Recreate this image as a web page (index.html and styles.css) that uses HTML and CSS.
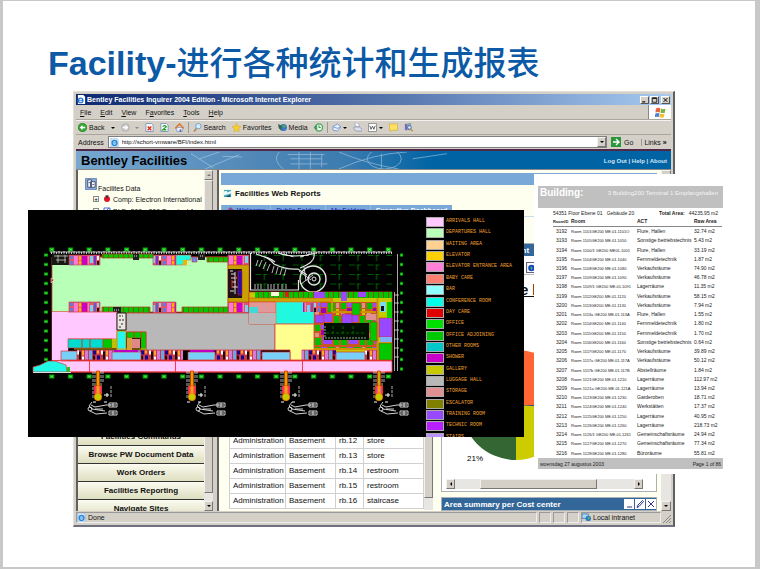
FILE: index.html
```
<!DOCTYPE html>
<html lang="zh-CN">
<head>
    <meta charset="UTF-8">
    <meta name="viewport" content="width=device-width, initial-scale=1.0">
    <title>Facility-进行各种统计和生成报表</title>
    <link rel="stylesheet" href="styles.css">
</head>
<body>
<main class="slide">
    <h1>Facility-<span>进行各种统计和生成报表</span></h1>

    <div class="stage">
        <!-- Browser window -->
        <section class="window">
            <header class="titlebar">
                <svg class="icon" viewBox="0 0 10 10"><path d="M1 0h6l2 2v8H1z" fill="#fff"/><circle cx="4" cy="6" r="2.5" fill="none" stroke="#2878d8" stroke-width="1.5"/><path d="M2 6h5" stroke="#2878d8"/></svg>
                <span class="caption">Bentley Facilities Inquirer 2004 Edition - Microsoft Internet Explorer</span>
                <button class="winbtn" aria-label="Minimize"><svg viewBox="0 0 8 8"><path d="M1 6.5h4" stroke="#000" stroke-width="1.5"/></svg></button>
                <button class="winbtn" aria-label="Maximize"><svg viewBox="0 0 8 8"><path d="M1 1.5h6V7H1z" fill="none" stroke="#000"/><path d="M1 1.5h6" stroke="#000" stroke-width="1.5"/></svg></button>
                <button class="winbtn close" aria-label="Close"><svg viewBox="0 0 8 8"><path d="M1.500 1.500l5 5m0-5l-5 5" stroke="#000" stroke-width="1.3"/></svg></button>
            </header>

            <nav class="menubar">
                <button><u>F</u>ile</button>
                <button><u>E</u>dit</button>
                <button><u>V</u>iew</button>
                <button>F<u>a</u>vorites</button>
                <button><u>T</u>ools</button>
                <button><u>H</u>elp</button>
                <span class="flag"><svg viewBox="0 0 12 12"><path d="M1 2q2-2 5-.5L5 6Q3 5 .500 6z" fill="#e8643c"/><path d="M6.800 2Q9 3 11.500 2L10.500 6.500Q8 7 5.800 6z" fill="#78b43c"/><path d="M.500 7Q3 6 5 7L4 11Q2 10-.500 11z" fill="#4a82d8"/><path d="M5.600 7Q8 8 10.300 7.300L9.500 11.500Q7 12 4.600 11z" fill="#f4c030"/></svg></span>
            </nav>

            <div class="toolbar">
                <button class="back"><svg class="icon" viewBox="0 0 10 10"><circle cx="5" cy="5" r="4.500" fill="#38a838" stroke="#288828"/><path d="M8 5H3m2-2L3 5l2 2" fill="none" stroke="#fff" stroke-width="1.400"/></svg>Back <i class="drop"></i></button>
                <button class="next" aria-label="Forward"><svg class="icon" viewBox="0 0 10 10"><circle cx="5" cy="5" r="4.300" fill="#ccc" stroke="#aaa"/><path d="M2 5h5M5 3l2 2-2 2" fill="none" stroke="#fff" stroke-width="1.400"/></svg><i class="drop grey"></i></button>
                <button aria-label="Stop"><svg class="icon" viewBox="0 0 10 10"><path d="M1 .500h6l2 2v7H1z" fill="#fff" stroke="#7890b8"/><path d="M3 4l4 4m0-4L3 8" stroke="#e02818" stroke-width="1.600"/></svg></button>
                <button aria-label="Refresh"><svg class="icon" viewBox="0 0 10 10"><path d="M1 .500h6l2 2v7H1z" fill="#fff" stroke="#7890b8"/><path d="M3 4q2-2 4 0L3 7.500h4" fill="none" stroke="#28a028" stroke-width="1.400"/></svg></button>
                <button aria-label="Home"><svg class="icon" viewBox="0 0 10 10"><path d="M2 5v4.500h6V5z" fill="#f4f4ff" stroke="#7888b0" stroke-width=".7"/><path d="M0 6l5-5 5 5" fill="none" stroke="#d87828" stroke-width="1.600"/><path d="M5 7h2v3H5z" fill="#4878c8"/></svg></button>
                <span class="sep"></span>
                <button><svg class="icon" viewBox="0 0 10 10"><path d="M1 9.500l3-3.500" stroke="#b08850" stroke-width="1.800"/><circle cx="6" cy="3.500" r="3" fill="#d8ecff" stroke="#6898d0"/></svg>Search</button>
                <button><svg class="icon" viewBox="0 0 10 10"><path d="M5 0l1.400 3.500L10 4 7.200 6.300 8 10 5 8 2 10l.8-3.700L0 4l3.600-.500z" fill="#f8d028" stroke="#d8a020" stroke-width=".5"/></svg>Favorites</button>
                <button><svg class="icon" viewBox="0 0 10 10"><circle cx="6" cy="5" r="4" fill="#3878c8"/><path d="M4 2l5 1-2 3z" fill="#48b048"/><path d="M0 1l4 2v5L1 6z" fill="#386050"/></svg>Media</button>
                <button aria-label="History"><svg class="icon" viewBox="0 0 10 10"><circle cx="5.500" cy="5" r="4" fill="#e8f8e8" stroke="#48a858" stroke-width="1.400"/><path d="M5.500 2.500V5h2M0 5l3 2 0-4z" fill="none" stroke="#288848"/></svg></button>
                <span class="sep"></span>
                <button aria-label="Mail"><svg class="icon" viewBox="0 0 10 10"><path d="M1 4l5-3 4 3-4 5-5-1z" fill="#e4ecfc" stroke="#7898c8"/><path d="M1 4l5 2 4-2" fill="none" stroke="#7898c8"/></svg><i class="drop"></i></button>
                <button aria-label="Print"><svg class="icon" viewBox="0 0 10 10"><path d="M2 0h4l1 4H3z" fill="#fff" stroke="#8898b8" stroke-width=".7"/><path d="M1 4.500h6l3 2V9H4L1 7z" fill="#dce0ec" stroke="#8890a8" stroke-width=".8"/></svg></button>
                <button aria-label="Edit"><svg class="icon" viewBox="0 0 10 10"><path d="M.500.500h9v9h-9z" fill="#fff" stroke="#888"/><path d="M2 3l1.300 4L5 3.500 6.500 7 8 3" fill="none" stroke="#555"/></svg><i class="drop"></i></button>
                <button aria-label="Discuss"><svg class="icon" viewBox="0 0 10 10"><path d="M.500 1h9v7h-5L2 9.500V8H.500z" fill="#ffe060" stroke="#c8a840" stroke-width=".7"/></svg></button>
                <button aria-label="Research"><svg class="icon" viewBox="0 0 10 10"><path d="M1 1h3v7H1z" fill="#7868b8"/><path d="M4 0h4v8H4z" fill="#90a8a0"/><circle cx="6" cy="5" r="2" fill="#d8f0ff" stroke="#3868b0"/><path d="M7 7l3 2" stroke="#c89030" stroke-width="1.500"/></svg></button>
            </div>

            <form class="address">
                <label for="url">Address</label>
                <div class="field">
                    <svg class="icon" viewBox="0 0 10 10"><path d="M1 0h6l2 2v8H1z" fill="#d8ecff" stroke="#88a8d0" stroke-width=".6"/><circle cx="5" cy="5.500" r="2.700" fill="none" stroke="#2888d8" stroke-width="1.500"/><path d="M3 5.500h5" stroke="#2888d8"/></svg>
                    <input id="url" type="text" value="http://schort-vmware/BFI/index.html">
                    <button type="button" class="arrow" aria-label="Show addresses"><i class="drop"></i></button>
                </div>
                <button type="button" class="go"><svg class="icon" viewBox="0 0 10 10"><path d="M0 0h10v10H0z" fill="#289838"/><path d="M2 5h5M5 2l3 3-3 3" fill="none" stroke="#fff" stroke-width="1.400"/></svg>Go</button>
                <button type="button" class="links">Links <b>»</b></button>
            </form>

            <div class="banner">
                <strong>Bentley Facilities</strong>
                <svg class="banner-art" viewBox="0 0 220 20" preserveAspectRatio="none">
                    <g fill="none" stroke="#b4d0e8" stroke-width=".7" opacity=".7">
                        <path d="M0 2l16 17M6 8l14-8M10 20l24-17M22 5l14 1M62 0q-5 10 3 20M68 3h26M70 8h22M70 14h26M76 0v20M84 0v20M92 2v16M104 0q20 14 42 20M104 20q24-18 48-20M156 8l24-6M134 2v18"/>
                        <circle cx="136" cy="8" r="12"/>
                    </g>
                </svg>
                <span class="banner-links"><a href="#">Log Out</a> | <a href="#">Help</a> | <a href="#">About</a></span>
            </div>

            <div class="frames">
                <aside class="sidebar">
                    <div class="sidebar-body">
                        <ul class="tree">
                            <li class="root"><svg viewBox="0 0 13 13"><path d="M.500.500h12v12H.500z" fill="#88a8d8" stroke="#6888b8"/><path d="M3 2h4v8H3zM6 4h5v6H6z" fill="#fff" stroke="#405070"/><path d="M4 5h2m2 2h2" stroke="#405070"/></svg>Facilites Data</li>
                            <li><b class="plus">+</b><svg viewBox="0 0 8 8"><circle cx="4" cy="4" r="3" fill="#d81828"/><path d="M3 0l1 3 1-3" stroke="#333" fill="none"/></svg>Comp: Electron International</li>
                            <li><b class="plus">+</b><svg viewBox="0 0 8 8"><path d="M1 1h6v6H1z" fill="#fff" stroke="#4868d0"/><path d="M2 5l4-4" stroke="#4868d0"/></svg>BLD: 200 - 200 Terminal 1</li>
                        </ul>
                        <nav class="sidenav">
                            <button>Facilities Commands</button>
                            <button>Browse PW Document Data</button>
                            <button>Work Orders</button>
                            <button>Facilities Reporting</button>
                            <button>Navigate Sites</button>
                        </nav>
                    </div>
                    <div class="scroll">
                        <button class="arrow" aria-label="Scroll up"><i class="drop up"></i></button>
                        <span class="thumb"></span>
                        <button class="arrow" aria-label="Scroll down"><i class="drop"></i></button>
                    </div>
                </aside>

                <section class="content">
                    <div class="content-body">
                        <div class="band"></div>
                        <h2><svg viewBox="0 0 10 10"><path d="M1 1h8v8H1z" fill="#48a8b8"/><path d="M0 3l4-1 1 2 4-2v3L1 7z" fill="#e8fcff"/><path d="M3 9l5-3v3z" fill="#184868"/></svg>Facilities Web Reports</h2>
                        <nav class="tabs">
                            <a href="#"><svg viewBox="0 0 8 8"><path d="M0 4l4-4 4 4H6.500v4h-5V4z" fill="#904888"/></svg>Welcome</a>
                            <a href="#">Public Folders</a>
                            <a href="#">My Folders</a>
                            <a href="#" class="active">Executive Dashboard</a>
                        </nav>
                        <div class="panels">
                            <div class="rooms">
                                <table>
                                    <tr><td>Administration</td><td>Basement</td><td>rb.11</td><td>store</td></tr>
                                    <tr><td>Administration</td><td>Basement</td><td>rb.12</td><td>store</td></tr>
                                    <tr><td>Administration</td><td>Basement</td><td>rb.13</td><td>store</td></tr>
                                    <tr><td>Administration</td><td>Basement</td><td>rb.14</td><td>restroom</td></tr>
                                    <tr><td>Administration</td><td>Basement</td><td>rb.15</td><td>restroom</td></tr>
                                    <tr><td>Administration</td><td>Basement</td><td>rb.16</td><td>staircase</td></tr>
                                </table>
                                <div class="scroll"><span class="thumb"></span></div>
                            </div>
                            <div class="portlets">
                                <section class="portlet chart">
                                    <h3>Space management</h3>
                                    <div class="chart-tools"><svg viewBox="0 0 10 10"><path d="M.500.500h9v9h-9z" fill="#fff" stroke="#606080"/><circle cx="5" cy="5.500" r="3" fill="#1848c0"/><path d="M4 4l2 1-1 3z" fill="#50c050"/></svg></div>
                                    <h4>Space by type</h4>
                                    <svg class="pie" viewBox="0 0 206 136">
                                        <path d="M70 62V7a55 55 0 0 1 55 55z" fill="#ff6633"/>
                                        <path d="M70 62h55a55 55 0 0 1-55 55z" fill="#cccc00"/>
                                        <path d="M70 62v55a55 55 0 0 1-55-55z" fill="#336633"/>
                                        <path d="M70 62h55v3z" fill="#333399"/>
                                        <text x="21" y="118">21%</text>
                                    </svg>
                                    <div class="scroll flat">
                                        <button class="arrow" aria-label="Scroll left"><i class="drop left"></i></button>
                                        <span class="thumb"></span>
                                        <button class="arrow" aria-label="Scroll right"><i class="drop right"></i></button>
                                    </div>
                                </section>
                                <section class="portlet">
                                    <h3>Area summary per Cost center
                                        <span class="tools">
                                            <button aria-label="Minimize"><svg viewBox="0 0 10 10"><path d="M3 8h5"/></svg></button>
                                            <button aria-label="Edit"><svg viewBox="0 0 10 10"><path d="M2 8.500L3 6l4.500-4.500 1 1L4 7.500z"/></svg></button>
                                            <button aria-label="Close"><svg viewBox="0 0 10 10"><path d="M2 2l6 6m0-6L2 8"/></svg></button>
                                        </span>
                                    </h3>
                                </section>
                            </div>
                        </div>
                    </div>
                    <div class="scroll">
                        <button class="arrow" aria-label="Scroll up"><i class="drop up"></i></button>
                        <span class="track"></span>
                        <button class="arrow" aria-label="Scroll down"><i class="drop"></i></button>
                    </div>
                </section>
            </div>

            <footer class="status">
                <span class="done"><svg class="icon" viewBox="0 0 10 10"><path d="M1 0h6l2 2v8H1z" fill="#d8ecff" stroke="#88a8d0" stroke-width=".6"/><circle cx="5" cy="5.500" r="2.700" fill="none" stroke="#2888d8" stroke-width="1.500"/><path d="M3 5.500h5" stroke="#2888d8"/></svg>Done</span>
                <span class="cell"></span>
                <span class="cell"></span>
                <span class="cell"></span>
                <span class="zone"><svg class="icon" viewBox="0 0 10 10"><path d="M0 1h7v5H0z" fill="#a8d8f8" stroke="#3868a8" stroke-width=".8"/><circle cx="7" cy="6" r="3" fill="#2878d0"/><path d="M6 4l3 1-2 3z" fill="#50b850"/></svg>Local intranet</span>
                <svg class="grip" viewBox="0 0 8 8"><path d="M8 0L0 8M8 3L3 8M8 6L6 8" stroke="#888"/></svg>
            </footer>
        </section>

        <!-- Terminal floor plan with room type legend -->
        <section class="plan">
            <svg class="drawing" viewBox="0 0 396 227">
                <defs>
                    <pattern id="tagsX" width="18.700" height="6" x="14.300" y="36" patternUnits="userSpaceOnUse">
                        <path d="M7 1.500h5v4H7z" fill="#00a800"/><path d="M8 2.500l3 2m0-2l-3 2" stroke="#70ff70" stroke-width=".7"/>
                    </pattern>
                    <pattern id="tagsX2" width="18.700" height="6" x="14.300" y="163" patternUnits="userSpaceOnUse">
                        <path d="M7 1.500h5v4H7z" fill="#00a800"/><path d="M8 2.500l3 2m0-2l-3 2" stroke="#70ff70" stroke-width=".7"/>
                    </pattern>
                    <pattern id="tagsY" width="6" height="9.500" x="15" y="40" patternUnits="userSpaceOnUse">
                        <path d="M1 3.500h4v3H1z" fill="#00a800"/><path d="M2 5h2" stroke="#80ff80" stroke-width=".8"/>
                    </pattern>
                    <pattern id="tagsY2" width="6" height="9.500" x="371" y="40" patternUnits="userSpaceOnUse">
                        <path d="M1 3.500h3v3H1z" fill="#00b800"/><path d="M2 5h1" stroke="#80ff80"/>
                    </pattern>
                    <pattern id="ticks" width="5" height="3" y="41" patternUnits="userSpaceOnUse">
                        <path d="M0 1h5M1 0v3M3.500 1v2" stroke="#eee" stroke-width=".8"/>
                    </pattern>
                    <pattern id="shops" width="31" height="11" x="41" y="45" patternUnits="userSpaceOnUse">
                        <path d="M0 0h31v11H0z" fill="#e05868"/>
                        <path d="M1 1h3v3H1zM1 6h3v4H1z" fill="#6878e0"/><path d="M5 1h4v9H5z" fill="#ff78d8"/>
                        <path d="M10 1h2v4h-2zM10 6h2v4h-2z" fill="#ffb000"/><path d="M13 1h5v9h-5z" fill="#c800c8"/>
                        <path d="M19 1h1v9h-1z" fill="#ff78d8"/><path d="M21 1h3v7h-3z" fill="#78d0f8"/>
                        <path d="M25 1h2v9h-2z" fill="#8030c0"/><path d="M28 1h2v4h-2z" fill="#fff"/><path d="M28 6h2v4h-2z" fill="#181818"/>
                    </pattern>
                    <pattern id="shopsLow" width="31" height="11" x="41" y="92" patternUnits="userSpaceOnUse">
                        <path d="M0 0h31v11H0z" fill="#e05868"/>
                        <path d="M1 1h3v3H1zM1 6h3v4H1z" fill="#6878e0"/><path d="M5 1h4v9H5z" fill="#ff78d8"/>
                        <path d="M10 1h2v4h-2zM10 6h2v4h-2z" fill="#ffb000"/><path d="M13 1h5v9h-5z" fill="#c800c8"/>
                        <path d="M19 1h1v9h-1z" fill="#ff78d8"/><path d="M21 3h3v7h-3z" fill="#78d0f8"/>
                        <path d="M25 1h2v9h-2z" fill="#6858c0"/><path d="M28 1h2v4h-2z" fill="#a0c8f0"/><path d="M28 6h2v4h-2z" fill="#181818"/>
                    </pattern>
                    <pattern id="service" width="24" height="11" x="49" y="139.500" patternUnits="userSpaceOnUse">
                        <path d="M0 0h24v11H0z" fill="#c83848"/>
                        <path d="M0 1h2v4H0zM5 7h2v3H5z" fill="#fff"/><path d="M2 2h2v8H2zM16 6h2v4h-2z" fill="#101010"/>
                        <path d="M5 1h2v5H5zM20 1h2v3h-2z" fill="#ffa828"/><path d="M8 1h3v9H8z" fill="#d878d8"/>
                        <path d="M12 1h3v9h-3z" fill="#68a8e8"/><path d="M16 1h3v4h-3zM20 6h3v4h-3z" fill="#180090"/>
                    </pattern>
                    <pattern id="green" width="5" height="7" patternUnits="userSpaceOnUse">
                        <path d="M0 0h5v7H0z" fill="#00c800"/><path d="M.500 0v7" stroke="#b83000" stroke-width=".8"/>
                    </pattern>
                    <pattern id="rooms" width="26" height="22" x="286" y="92" patternUnits="userSpaceOnUse">
                        <path d="M0 0h26v22H0z" fill="#c85820"/>
                        <path d="M1 1h5v6H1zM14 1h7v9h-7zM1 14h6v7H1zM20 14h5v7h-5z" fill="#00c000"/>
                        <path d="M7 1h6v4H7zM9 12h9v8H9z" fill="#9848ff"/><path d="M7 6h5v5H7z" fill="#a000b0"/>
                        <path d="M22 1h3v5h-3zM1 9h4v4H1z" fill="#e09090"/><path d="M22 7h3v6h-3z" fill="#c8c800"/>
                    </pattern>
                    <pattern id="site" width="18.700" height="9.500" x="3" y="45" patternUnits="userSpaceOnUse">
                        <path d="M0 .500h12" stroke="#008000" stroke-width=".7" stroke-dasharray="6 2"/><path d="M9 0v6" stroke="#00a000" stroke-width=".7"/>
                    </pattern>
                    <g id="pier">
                        <path d="M-5 0v28M5 0v12M13 15v12M-3 0v16M3 0v16" stroke="#ddd" stroke-width=".8" stroke-dasharray="3 1"/>
                        <path d="M-1.500 0h3v17h-3z" fill="#c8b000" stroke="#f03000" stroke-width=".8"/>
                        <path d="M-3.500 15h7v8h-7z" fill="#e038a0" stroke="#ff3000"/>
                        <path d="M-1.500 15h3v9h-3z" fill="#ffa000"/>
                        <circle cy="26" r="3.700" fill="#c8c800" stroke="#ff7800" stroke-width=".7"/>
                        <path d="M6 24h5m-2-2v4M-5 31h3m8 0h3" stroke="#fff"/>
                    </g>
                    <g id="note" fill="none" stroke="#e8e8e8" stroke-width=".9">
                        <circle cx="0" cy="7" r="2"/><path d="M2 0l-3 4 3 3 13 2M1 3l4 2 11-2h5M5 7h8M0 9l6 3 11-1"/>
                        <path d="M19 1h8v4h-8zM19 9h8v4h-8z"/><path d="M20 3h6m-3-2v4M20 11h6m-3-2v4"/>
                    </g>
                </defs>

                <path d="M20 36h348v6H20z" fill="url(#tagsX)"/>
                <path d="M20 163h348v6H20z" fill="url(#tagsX2)"/>
                <path d="M15 40h6v117h-6z" fill="url(#tagsY)"/>
                <path d="M371 40h6v123h-6z" fill="url(#tagsY2)"/>
                <path d="M22 41h342v3H22z" fill="url(#ticks)"/>
                <path d="M222 44h142v37H222z" fill="url(#site)"/>

                <!-- forecourt -->
                <g fill="none" stroke="#e4e4e4">
                    <path d="M222.500 43v37h48V70M228 44q14 4 18 10 12 6 24 5l9 6M250 43q16 6 38 0M233 46q8 1 14 6M272 58q16-6 14-14" stroke-width="1.200"/>
                    <path d="M256 44l10 3m6 0l9-2" stroke-dasharray="4 2"/>
                    <path d="M230 50l-2 6m6-6l-3 7m7-5l-3 7m7-5l-3 7m7-5l-2 7m6-6l-2 7m6-6l-2 7m6-6l-2 7M227 74v5m3-5v5m3-5v5m7-5v5m3-5v5m3-5v5m4-5v5m4-5v5m4-5v5" stroke-width=".8"/>
                    <circle cx="285" cy="69" r="13" stroke-width="1.400"/><circle cx="286" cy="69" r="6" stroke-width="1.400"/><circle cx="286" cy="69" r="2"/>
                    <path d="M271 61l12 9m-10 4l12-9M276 57l2 14" stroke-width=".9"/>
                </g>

                <!-- departures hall -->
                <path d="M24 47h176v55H24z" fill="#b8ffb8" stroke="#d85030" stroke-width=".8"/>
                <path d="M24 44h17v11H24z" fill="#181810"/><path d="M26 46h14M28 50h10M30 45v8m7-8v8" stroke="#ccc" stroke-width=".8"/>
                <path d="M41 45h31v10H41zM125 45h23v10h-23zM200 45h21v10h-21z" fill="url(#shops)" stroke="#b04060" stroke-width=".6"/>
                <path d="M41 92h31v11H41zM125 92h23v11h-23zM200 92h21v11h-21z" fill="url(#shopsLow)" stroke="#b04060" stroke-width=".6"/>
                <path d="M74 44h51v4H74zM74 97h48v6H74zM154 97h46v6h-46zM179 47h21v5h-21z" fill="url(#green)" stroke="#a04018" stroke-width=".7"/>
                <path d="M148 45h15v5h-5v5h-10z" fill="#20f8e0" stroke="#f05030" stroke-width=".6"/><path d="M155 50h4v5h-4z" fill="#f8b000"/>
                <path d="M164 47h5v5h-5z" fill="#6888f0" stroke="#d03030" stroke-width=".6"/>
                <path d="M105 44h6v6h-6zM170 44h7v6h-7zM85 97h8v6h-8z" fill="#202020"/><path d="M106 46h4m62 0h4M86 100h6" stroke="#ddd" stroke-dasharray="1 1"/>
                <path d="M23 68l3 2-3 3z" fill="#e02020" stroke="#fff" stroke-width=".5"/>
                <path d="M200 55h21v37h-21z" fill="#c8a000" stroke="#d04818" stroke-width=".7"/><path d="M200 59h14v29h-14z" fill="#201018"/>
                <path d="M202 61h3m2 3h-4m0 4h6m-5 4h4m-4 5h6m-8 4h4m1-19v22" stroke="#ddd" stroke-width="1"/><path d="M204 70v8m4-12v3" stroke="#e02020" stroke-width="1"/>
                <path d="M210 61h4v24h-4z" fill="#2010b0" stroke="#d01818" stroke-width=".6"/>

                <!-- arrivals and luggage halls -->
                <path d="M24 102h65v27H40v11h-7v11h331v11H24z" fill="#ffc8ff" stroke="#e04040" stroke-width=".8"/>
                <path d="M24 102h16v49H24z" fill="#ffc8ff"/>
                <path d="M98 103h149v37H118v-18H98z" fill="#b8b8b8" stroke="#d03838" stroke-width=".8"/>
                <path d="M89 103h9v17h-9z" fill="#e8e8e0" stroke="#222"/><path d="M91 106h4m-4 4h5m-3 4h3m-5 3h3" stroke="#222" stroke-dasharray="2 1"/>
                <path d="M40 129h14v9H40zM54 129h8v9h-8zM62 129h13v9H62z" fill="#00dcd0" stroke="#d83828" stroke-width=".6"/>
                <path d="M75 129h9v9h-9zM99 122h7v6h-7zM106 122h7v6h-7zM113 122h5v18h-5z" fill="#00c800" stroke="#d03818" stroke-width=".6"/>
                <path d="M84 129h5v9h-5z" fill="#c0c000"/><path d="M89 121h9v19h-9z" fill="#20f8f0" stroke="#e09000"/>
                <path d="M99 128h5v12h-5z" fill="#d8a040"/><path d="M104 129h8v9h-8z" fill="#e08888"/>
                <path d="M46 139h72" stroke="#e0a020"/>

                <!-- right wing -->
                <path d="M221 82h143v68h-79v-36h-64z" fill="#c8c800" stroke="#d04020" stroke-width=".8"/>
                <path d="M227 82h137v6H227z" fill="url(#green)"/><path d="M243 82h8v4h-8z" fill="#fff8d8"/><path d="M257 82h4v5h-4z" fill="#e81818"/>
                <path d="M221 88h83v4h-83z" fill="#c8a800" stroke="#d83818" stroke-width=".5"/>
                <path d="M286 82h11v6h-11zM313 82h6v9h-6zM330 82h8v5h-8z" fill="#a048f8"/>
                <path d="M221 92h27v11h-27z" fill="#e09898" stroke="#e04040" stroke-width=".6"/>
                <path d="M221 97h9v6h-9z" fill="#40d8d8"/><path d="M221 103h27v11h-27z" fill="#b8b8b8"/>
                <path d="M248 92h38v22h-38z" fill="#20f8e0" stroke="#e08040" stroke-width=".6"/>
                <path d="M247 114h39v26h-12v10h-12v-10h-15z" fill="#ffff90" stroke="#e04040" stroke-width=".8"/>
                <path d="M286 92h63v48h-63z" fill="url(#rooms)"/>
                <path d="M275 92h17v10h-17z" fill="url(#shopsLow)"/>
                <path d="M304 88v14M349.500 88v62M304 102h44M286 139h64" stroke="#d09000" stroke-width="2" fill="none"/>
                <path d="M324 93h8v12h-8zM342 112h7v19h-7zM351 133h13v17h-13z" fill="#00c800" stroke="#d02818" stroke-width=".6"/>
                <path d="M314 104h10v10h-10zM287 105h9v8h-9zM351 108h13v19h-13z" fill="#9848ff" stroke="#d02818" stroke-width=".6"/>
                <path d="M338 104h10v6h-10z" fill="#e09090"/><path d="M352 92h6v10h-6z" fill="#80d8f0"/><path d="M353 96h3v5h-3z" fill="#111"/><path d="M359 92h5v16h-5z" fill="#00d800"/>
                <path d="M352 127h12v5h-12z" fill="#80b0f8"/>
                <path d="M296 113h45v17h-45z" fill="#001000"/><path d="M298 123h40M305 116v10m10-10v10m10-10v10" stroke="#006000" stroke-dasharray="3 2"/>
                <path d="M297 116v12h42" fill="none" stroke="#ccc" stroke-width=".8" stroke-dasharray="2 1"/>
                <path d="M366.500 82v79M369.500 44v117" stroke="#bbb" stroke-width=".9"/><path d="M366 85h5m-5 8h5m-5 9h5m-5 9h5m-5 9h5m-5 9h5m-5 9h5m-5 9h5" stroke="#ddd" stroke-width=".8"/>

                <!-- service row -->
                <path d="M49 140h106v10H49zM187 140h47v10h-47zM274 140h34v10h-34zM337 140h12v10h-12z" fill="url(#service)"/>
                <path d="M33 141h16v9H33zM84 142h29v8H84zM160 142h27v8h-27zM234 142h28v8h-28zM308 142h29v8h-29z" fill="#78d0f8" stroke="#e03030" stroke-width=".7"/>
                <path d="M86 140h24v2H86zM162 140h24v2h-24z" fill="#c000c0"/>
                <path d="M24 150.500h340M24 162h340M61.500 151v11M147.500 151v11M274.500 151v11" stroke="#f03030" stroke-width=".9"/>
                <path d="M5 162v-5l7-2 8-4h7l11 4 1 7z" fill="#20f8e8" stroke="#e03030" stroke-width=".7"/><path d="M39 157h3v5h-3z" fill="#20c020"/>
                <path d="M5 162.500h38" stroke="#ddd"/>

                <use href="#pier" x="70" y="161"/><use href="#pier" x="164" y="161"/><use href="#pier" x="258" y="161"/><use href="#pier" x="351" y="161"/>
                <use href="#note" x="62" y="192"/><use href="#note" x="170" y="192"/><use href="#note" x="262" y="192"/><use href="#note" x="353" y="192"/>
            </svg>
            <ul class="legend">
                <li><i class="c1"></i>ARRIVALS HALL</li>
                <li><i class="c2"></i>DEPARTURES HALL</li>
                <li><i class="c3"></i>WAITING AREA</li>
                <li><i class="c4"></i>ELEVATOR</li>
                <li><i class="c5"></i>ELEVATOR ENTRANCE AREA</li>
                <li><i class="c6"></i>BABY CARE</li>
                <li><i class="c7"></i>BAR</li>
                <li><i class="c8"></i>CONFERENCE ROOM</li>
                <li><i class="c9"></i>DAY CARE</li>
                <li><i class="c10"></i>OFFICE</li>
                <li><i class="c11"></i>OFFICE ADJOINING</li>
                <li><i class="c12"></i>OTHER ROOMS</li>
                <li><i class="c13"></i>SHOWER</li>
                <li><i class="c14"></i>GALLERY</li>
                <li><i class="c15"></i>LUGGAGE HALL</li>
                <li><i class="c16"></i>STORAGE</li>
                <li><i class="c17"></i>ESCALATOR</li>
                <li><i class="c18"></i>TRAINING ROOM</li>
                <li><i class="c19"></i>TECHNIC ROOM</li>
                <li><i class="c20"></i>STAIRS</li>
            </ul>
        </section>

        <!-- Room area report -->
        <section class="report">
            <header><strong>Building:</strong><span>3 Building200 Terminal 1 Empfangshallen</span></header>
            <p class="summary"><span>54351 Floor Ebene 01 &nbsp; Gebäude 20</span><span><b>Total Area:</b> &nbsp; 44235.95 m2</span></p>
            <table>
                <thead>
                    <tr><th>RoomID</th><th>Room</th><th>ACT</th><th>Raw Area</th></tr>
                </thead>
                <tbody>
                    <tr><td>3192</td><td>Room 1101GE200 ME.01.1101O</td><td>Flure, Hallen</td><td>32.74 m2</td></tr>
                    <tr><td>3193</td><td>Room 1105GE200 ME.01.1050</td><td>Sonstige betriebstechnis</td><td>5.43 m2</td></tr>
                    <tr><td>3194</td><td>Room 1100/1 GE200 ME01.1001</td><td>Flure, Hallen</td><td>33.19 m2</td></tr>
                    <tr><td>3195</td><td>Room 1104GE200 ME.01.1040</td><td>Fernmeldetechnik</td><td>1.87 m2</td></tr>
                    <tr><td>3196</td><td>Room 1108GE200 ME.01.1080</td><td>Verkaufsräume</td><td>74.90 m2</td></tr>
                    <tr><td>3197</td><td>Room 1109GE200 ME.01.1090</td><td>Verkaufsräume</td><td>46.78 m2</td></tr>
                    <tr><td>3198</td><td>Room 1109/1 GE200 ME.01.1091</td><td>Lagerräume</td><td>11.35 m2</td></tr>
                    <tr><td>3199</td><td>Room 1112GE200 ME.01.1120</td><td>Verkaufsräume</td><td>58.15 m2</td></tr>
                    <tr><td>3200</td><td>Room 1113GE200 ME.01.1130</td><td>Verkaufsräume</td><td>7.94 m2</td></tr>
                    <tr><td>3201</td><td>Room 1113a GE200 ME.01.113A</td><td>Flure, Hallen</td><td>1.55 m2</td></tr>
                    <tr><td>3202</td><td>Room 1114GE200 ME.01.1140</td><td>Fernmeldetechnik</td><td>1.80 m2</td></tr>
                    <tr><td>3203</td><td>Room 1115GE200 ME.01.1150</td><td>Fernmeldetechnik</td><td>1.70 m2</td></tr>
                    <tr><td>3204</td><td>Room 1116GE200 ME.01.1160</td><td>Sonstige betriebstechnis</td><td>0.64 m2</td></tr>
                    <tr><td>3205</td><td>Room 1117GE200 ME.01.1170</td><td>Verkaufsräume</td><td>39.89 m2</td></tr>
                    <tr><td>3206</td><td>Room 1117a GE200 ME.01.117A</td><td>Verkaufsräume</td><td>50.12 m2</td></tr>
                    <tr><td>3207</td><td>Room 1117b GE200 ME.01.117B</td><td>Abstellräume</td><td>1.84 m2</td></tr>
                    <tr><td>3208</td><td>Room 1121GE200 ME.01.1210</td><td>Lagerräume</td><td>112.97 m2</td></tr>
                    <tr><td>3209</td><td>Room 1121a GE200 ME.01.121A</td><td>Lagerräume</td><td>13.94 m2</td></tr>
                    <tr><td>3210</td><td>Room 1123GE200 ME.01.1230</td><td>Garderoben</td><td>18.71 m2</td></tr>
                    <tr><td>3211</td><td>Room 1124GE200 ME.01.1240</td><td>Werkstätten</td><td>17.37 m2</td></tr>
                    <tr><td>3212</td><td>Room 1125GE200 ME.01.1250</td><td>Lagerräume</td><td>40.95 m2</td></tr>
                    <tr><td>3213</td><td>Room 1126GE200 ME.01.1260</td><td>Lagerräume</td><td>218.73 m2</td></tr>
                    <tr><td>3214</td><td>Room 1126/1 GE200 ME.01.1261</td><td>Gemeinschaftsräume</td><td>24.94 m2</td></tr>
                    <tr><td>3215</td><td>Room 1127GE200 ME.01.1270</td><td>Gemeinschaftsräume</td><td>77.34 m2</td></tr>
                    <tr><td>3216</td><td>Room 1128GE200 ME.01.1280</td><td>Büroräume</td><td>55.81 m2</td></tr>
                </tbody>
            </table>
            <footer><span>woensdag 27 augustus 2003</span><span>Page 1 of 86</span></footer>
        </section>
    </div>
</main>
</body>
</html>
```
FILE: styles.css
```
:root {
    --face: #d4d0c8;
    --cream: #fffff0;
    --blue: #78a8d8;
    --navy: #336699;
}
* {
    box-sizing: border-box;
}
body {
    margin: 0;
    background: #c8c8c8;
    font-family: "Liberation Sans", "Noto Sans CJK SC", sans-serif;
    font-size: 7px;
    color: #111;
}
button {
    font: inherit;
    color: inherit;
    background: none;
    border: 0;
    padding: 0;
}
svg {
    display: block;
    flex: none;
}
ul {
    list-style: none;
    margin: 0;
    padding: 0;
}
table {
    border-collapse: collapse;
}
.slide {
    margin: 1px 5px 2px 3px;
    padding: 40px 80px 40px 70px;
    background: #fff;
}
h1 {
    height: 40px;
    margin: 0 -80px 10px -25px;
    font-size: 34px;
    line-height: 40px;
    color: #0c59a6;
    white-space: nowrap;
}
h1 span {
    font-family: "Noto Sans CJK SC", sans-serif;
    font-size: 33px;
    font-weight: 500;
}
.stage {
    position: relative;
}

/* browser window */
.window {
    padding: 2px;
    background: var(--face);
    border: 1px solid #e4e0d8;
    border-right: 2px solid #606060;
    border-bottom: 2px solid #707080;
}
.icon {
    width: 9px;
    height: 9px;
}
.titlebar {
    display: flex;
    align-items: center;
    gap: 1px;
    height: 11px;
    padding: 0 1px;
    background: linear-gradient(90deg, #0c2870, #5878b0 55%, #a6caf0);
    color: #fff;
}
.caption {
    flex: 1;
    font-weight: bold;
}
.winbtn {
    width: 9px;
    height: 8px;
    background: var(--face);
    border: 1px solid;
    border-color: #fff #555 #555 #fff;
}
.winbtn svg {
    width: 7px;
    height: 6px;
}
.close {
    margin-left: 1px;
}
.menubar {
    display: flex;
    align-items: center;
    gap: 9px;
    height: 15px;
    padding-left: 4px;
    border-bottom: 1px solid #aaa69e;
}
.flag {
    display: flex;
    justify-content: center;
    align-items: center;
    width: 23px;
    height: 14px;
    margin-left: auto;
    background: #fff;
    border-left: 1px solid #888;
}
.flag svg {
    width: 11px;
    height: 11px;
}
.toolbar {
    display: flex;
    align-items: center;
    gap: 6px;
    height: 15px;
    padding-left: 2px;
    border-top: 1px solid #f4f2ee;
    border-bottom: 1px solid #aaa69e;
}
.toolbar button {
    display: flex;
    align-items: center;
    gap: 2px;
}
.toolbar .next {
    gap: 5px;
}
.toolbar .back .drop {
    margin-left: 4px;
}
.sep {
    width: 1px;
    height: 11px;
    margin: 0 -2px;
    background: #999;
}
.drop {
    display: block;
    width: 0;
    height: 0;
    border: 2px solid transparent;
    border-top-color: #000;
    border-bottom-width: 0;
}
.drop.grey {
    border-top-color: #888;
}
.drop.up {
    border: 2px solid transparent;
    border-bottom-color: #777;
    border-top-width: 0;
}
.drop.left {
    border: 2px solid transparent;
    border-right-color: #000;
    border-left-width: 0;
}
.drop.right {
    border: 2px solid transparent;
    border-left-color: #000;
    border-right-width: 0;
}
.address {
    display: flex;
    align-items: center;
    gap: 4px;
    height: 14px;
    padding: 0 2px;
}
.field {
    display: flex;
    align-items: center;
    flex: 1;
    height: 12px;
    padding-left: 1px;
    background: #fff;
    border: 1px solid #808080;
}
.field input {
    flex: 1;
    min-width: 0;
    height: 10px;
    padding: 0 3px;
    border: 0;
    background: none;
    font: inherit;
    font-size: 6px;
    color: inherit;
}
.arrow {
    display: flex;
    align-items: center;
    justify-content: center;
    flex: none;
    width: 9px;
    height: 10px;
    background: var(--face);
    border: 1px solid;
    border-color: #f4f2ee #777 #777 #f4f2ee;
}
.go {
    display: flex;
    align-items: center;
    gap: 3px;
    width: 26px;
}
.go .icon {
    width: 10px;
    height: 10px;
}
.links {
    width: 28px;
    border-left: 1px solid #999;
    text-align: center;
    white-space: nowrap;
}
.banner {
    display: flex;
    align-items: center;
    height: 20px;
    padding: 1px 4px 0 5px;
    background: linear-gradient(90deg, #78a8d0, #5088b8 30%, #3c7cb0 45%, #0064a4 60%);
    border-top: 2px solid #502848;
}
.banner strong {
    font-size: 13px;
    color: #000;
    white-space: nowrap;
}
.banner-art {
    flex: 1;
    height: 17px;
    margin: 0 100px 0 4px;
}
.banner-links {
    color: #cfe4f4;
    font-size: 6px;
    font-weight: bold;
}
.banner-links a {
    color: inherit;
    text-decoration: none;
}
.frames {
    display: grid;
    grid-template-columns: 137px 1fr;
    gap: 4px;
    height: 342px;
    border-top: 1px solid #888;
}
.sidebar,
.content {
    display: flex;
    min-width: 0;
    height: 341px;
    overflow: hidden;
    background: var(--cream);
    border-left: 2px solid #606060;
}
.sidebar-body {
    display: flex;
    flex-direction: column;
    justify-content: space-between;
    flex: 1;
    min-width: 0;
}
.tree {
    padding: 8px 0 0 7px;
    white-space: nowrap;
    overflow: hidden;
}
.tree li {
    display: flex;
    align-items: center;
    gap: 1px;
    height: 12px;
    padding-left: 8px;
}
.tree svg {
    width: 8px;
    height: 8px;
    margin-right: 1px;
}
.tree .root {
    height: 15px;
    padding: 0 0 1px;
    align-items: flex-end;
}
.root svg {
    width: 12px;
    height: 12px;
    margin: 0 0 2px;
}
.plus {
    width: 6px;
    height: 6px;
    margin-right: 3px;
    border: 1px solid #888;
    font-size: 6px;
    line-height: 4px;
    text-align: center;
}
.sidenav {
    height: 83px;
    overflow: hidden;
}
.sidenav button {
    display: block;
    width: 100%;
    height: 18px;
    background: linear-gradient(#fbfbf0, #dedec0);
    border-bottom: 1px solid #333;
    font-size: 8px;
    font-weight: bold;
    white-space: nowrap;
}
.sidenav button:first-child {
    margin-top: 9px;
    margin-top: 0;
}
.scroll {
    display: flex;
    flex-direction: column;
    width: 9px;
    background: #e8e6e2;
}
.thumb {
    flex: 1;
    background: var(--face);
    border: 1px solid;
    border-color: #f4f2ee #777 #777 #f4f2ee;
}
.track {
    flex: 1;
}
.sidebar .thumb {
    margin-bottom: 8px;
}
.content-body {
    flex: 1;
    min-width: 0;
    padding: 3px 4px 0 2px;
}
.content > .scroll,
.content > .scroll .arrow {
    width: 10px;
}
.band {
    height: 12px;
    background: var(--blue);
}
.content h2 {
    display: flex;
    align-items: center;
    gap: 3px;
    height: 20px;
    margin: 0;
    padding: 0 2px 3px;
    font-size: 8px;
}
.content h2 svg {
    width: 9px;
    height: 9px;
}
.tabs {
    display: flex;
    width: 231px;
    height: 11px;
    background: var(--blue);
}
.tabs a {
    display: flex;
    align-items: center;
    justify-content: center;
    gap: 3px;
    flex: 1 0 auto;
    border-left: 1px solid #94bce0;
    color: #1818c0;
}
.tabs svg {
    width: 7px;
    height: 7px;
}
.tabs .active {
    color: #fff;
    font-weight: bold;
    text-decoration: none;
}
.panels {
    display: flex;
    gap: 8px;
    height: 294px;
    padding: 26px 0 0 8px;
    border-top: 1px solid #c8dcf0;
}
.rooms {
    display: flex;
    align-items: flex-end;
    width: 204px;
}
.rooms table {
    flex: 1;
    margin-bottom: 1px;
    background: #fff;
    font-size: 8px;
    table-layout: fixed;
    width: 195px;
}
.rooms td {
    height: 15px;
    padding: 0 0 0 3px;
    border: 1px solid #d0d0d0;
    line-height: 10px;
}
.rooms td:nth-child(1) {
    width: 56px;
}
.rooms td:nth-child(2) {
    width: 50px;
}
.rooms td:nth-child(3) {
    width: 28px;
}
.rooms .scroll {
    height: 100%;
    padding-bottom: 12px;
}
.portlets {
    flex: 1;
    min-width: 0;
}
.portlet {
    background: #fff;
    border: 1px solid #a8b0b8;
}
.portlet h3 {
    display: flex;
    align-items: center;
    justify-content: space-between;
    height: 12px;
    margin: 0;
    padding-left: 2px;
    background: var(--navy);
    color: #fff;
    font-size: 8px;
    white-space: nowrap;
}
.chart {
    display: flex;
    flex-direction: column;
    height: 249px;
    margin-bottom: 5px;
    padding: 0 4px 2px;
}
.chart h3 {
    margin: 0 -4px;
    padding-left: 12px;
}
.chart-tools {
    height: 19px;
    padding: 6px 0 0 80px;
    border-bottom: 1px solid #bbb;
}
.chart-tools svg {
    width: 11px;
    height: 11px;
}
.chart h4 {
    margin: 6px 0 0 41px;
    font-size: 14px;
    line-height: 18px;
    text-decoration: underline;
}
.pie {
    width: 100%;
    margin-top: auto;
    font-size: 8px;
}
.scroll.flat {
    flex-direction: row;
    width: auto;
    height: 10px;
    margin-right: 9px;
}
.flat .thumb {
    margin: 0 37px 0 25px;
}
.tools {
    display: flex;
    gap: 1px;
}
.tools button {
    width: 10px;
    height: 10px;
    background: #fff;
}
.tools svg {
    width: 10px;
    height: 10px;
    fill: none;
    stroke: #303090;
}
.status {
    display: flex;
    gap: 2px;
    height: 12px;
    padding-top: 1px;
}
.status > span {
    display: flex;
    align-items: center;
    gap: 2px;
    border: 1px solid;
    border-color: #999 #eee #eee #999;
}
.done {
    flex: 1;
}
.cell {
    width: 12px;
}
.zone {
    width: 80px;
}
.grip {
    width: 8px;
    height: 8px;
    align-self: flex-end;
}

/* floor plan */
.plan {
    position: absolute;
    top: 119px;
    left: -45px;
    right: 151px;
    display: flex;
    height: 227px;
    overflow: hidden;
    background: #000;
}
.drawing {
    flex: 1;
    min-width: 0;
}
.legend {
    display: flex;
    flex-direction: column;
    justify-content: space-between;
    width: 98px;
    height: 226px;
    margin: 7px 0 0 2px;
    color: #f0a030;
    font-family: "Liberation Mono", monospace;
    font-size: 5px;
    line-height: 8px;
    white-space: nowrap;
}
.legend li {
    display: flex;
    gap: 2px;
}
.legend i {
    width: 18px;
    height: 10px;
    border: 1px solid #aaa;
}
.c1 { background: #ffc8ff; }
.c2 { background: #b8ffb8; }
.c3 { background: #ffd090; }
.c4 { background: #ffd000; }
.c5 { background: #ff80d8; }
.c6 { background: #ff8070; }
.c7 { background: #90ffff; }
.c8 { background: #00ffe8; }
.c9 { background: #e00000; }
.c10 { background: #00e000; }
.c11 { background: #00c800; }
.c12 { background: #00c8c8; }
.c13 { background: #c800c8; }
.c14 { background: #c8c800; }
.c15 { background: #b8b8b8; }
.c16 { background: #e09090; }
.c17 { background: #808000; }
.c18 { background: #9848ff; }
.c19 { background: #b820ff; }
.c20 { background: #b890ff; }

/* area report */
.report {
    position: absolute;
    top: 83px;
    left: 461px;
    right: -60px;
    padding: 12px 12px 5px 4px;
    background: #fff;
    font-size: 5px;
    color: #222;
}
.report header {
    display: flex;
    justify-content: space-between;
    height: 22px;
    padding: 1px 5px 0 2px;
    background: #c0c0c0;
    color: #f4f4f4;
    line-height: 12px;
}
.report header strong {
    font-size: 10px;
    color: #fff;
}
.report header span {
    font-size: 6px;
}
.summary {
    display: flex;
    justify-content: space-between;
    margin: 0;
    padding: 2px 5px 0 15px;
    line-height: 7px;
    white-space: nowrap;
}
.report table {
    width: 169px;
    height: 241px;
    margin-left: 15px;
    table-layout: fixed;
    white-space: nowrap;
}
.report th,
.report td {
    padding: 0;
    line-height: 5px;
    text-align: left;
}
.report th {
    height: 9px;
    border-bottom: 1px solid #888;
}
.report td:first-child {
    padding-left: 3px;
}
.report th:first-child,
.report td:nth-child(2) {
    font-size: 4px;
}
.report th:nth-child(1) {
    width: 18px;
}
.report th:nth-child(2) {
    width: 66px;
}
.report th:nth-child(3) {
    width: 57px;
}
.report footer {
    display: flex;
    justify-content: space-between;
    align-items: flex-end;
    height: 11px;
    padding: 2px 2px;
    background: #c0c0c0;
}
```
